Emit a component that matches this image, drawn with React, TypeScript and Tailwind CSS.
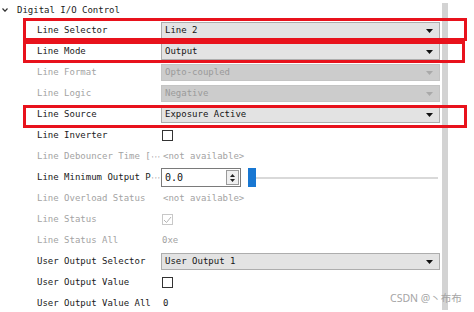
import type { ReactNode } from "react"

const mono = "font-['DejaVu_Sans_Mono',monospace] text-[9px] leading-none"

function Arrow({ disabled }: { disabled?: boolean }) {
  return (
    <svg width="7" height="4" viewBox="0 0 7 4">
      <path d="M0 0 L7 0 L3.5 4 Z" fill={disabled ? "#a9a9a9" : "#111"} />
    </svg>
  )
}

function Combo({ value, disabled }: { value: string; disabled?: boolean }) {
  return (
    <div
      className={`flex h-[17px] items-center justify-between border pl-[3px] pr-[6px] ${
        disabled ? "border-[#c4c4c4] bg-[#cccccc] text-[#9a9a9a]" : "border-[#adadad] bg-[#e3e3e3] text-[#151515]"
      }`}
    >
      <span>{value}</span>
      <Arrow disabled={disabled} />
    </div>
  )
}

function Check({ checked, disabled }: { checked?: boolean; disabled?: boolean }) {
  return (
    <div
      className={`ml-[1px] flex h-[11px] w-[11px] items-center justify-center border bg-white ${
        disabled ? "border-[#c8c8c8]" : "border-[#333]"
      }`}
    >
      {checked && (
        <svg width="9" height="8" viewBox="0 0 9 8">
          <path d="M1 4 L3.5 6.5 L8 1" stroke="#b4b4b4" strokeWidth="1" fill="none" />
        </svg>
      )}
    </div>
  )
}

function Row({ label, dim, more, children }: { label: string; dim?: boolean; more?: boolean; children?: ReactNode }) {
  return (
    <div className="flex h-[21px] items-center">
      <div className={`flex w-[124px] shrink-0 items-center whitespace-nowrap ${dim ? "text-[#a3a3a3]" : "text-[#1a1a1a]"}`}>
        <span>{label}</span>
        {more && <span className="text-[6px] tracking-[-0.5px] text-[#555]">···</span>}
      </div>
      <div className="w-[279px] shrink-0">{children}</div>
    </div>
  )
}

function Spin() {
  return (
    <div className="flex items-center">
      <div className="flex h-[19px] w-[80px] items-center justify-between border border-[#7a7a7a] bg-white pl-[3px] pr-[1px] text-[#111]">
        <span className="text-[10px]">0.0</span>
        <div className="flex h-[15px] w-[13px] flex-col items-center justify-center gap-[2px] border border-[#9a9a9a] bg-[#efefef]">
          <svg width="5" height="3" viewBox="0 0 5 3"><path d="M0 3 L2.5 0 L5 3 Z" fill="#222" /></svg>
          <svg width="5" height="3" viewBox="0 0 5 3"><path d="M0 0 L5 0 L2.5 3 Z" fill="#222" /></svg>
        </div>
      </div>
      <div className="ml-[7px] h-[19px] w-[8px] bg-[#1877d2]" />
      <div className="mr-[2px] h-[2px] flex-1 bg-[#d9d9d9]" />
    </div>
  )
}

const NA = () => <span className="pl-[2px] text-[#a3a3a3]">&lt;not available&gt;</span>

export default function App() {
  return (
    <div className={`relative h-[312px] w-[474px] overflow-hidden bg-white ${mono}`}>
      <div className="flex">
        <div className="w-[440px] shrink-0">
          <div className="flex h-[20px] items-center">
            <svg className="ml-[2px]" width="6" height="4" viewBox="0 0 6 4">
              <path d="M0.5 0.5 L3 3.2 L5.5 0.5" stroke="#333" strokeWidth="1.2" fill="none" />
            </svg>
            <span className="ml-[9px] text-[#1a1a1a]">Digital I/O Control</span>
          </div>
          <div className="pl-[37px]">
            <Row label="Line Selector"><Combo value="Line 2" /></Row>
            <Row label="Line Mode"><Combo value="Output" /></Row>
            <Row label="Line Format" dim><Combo value="Opto-coupled" disabled /></Row>
            <Row label="Line Logic" dim><Combo value="Negative" disabled /></Row>
            <Row label="Line Source"><Combo value="Exposure Active" /></Row>
            <Row label="Line Inverter"><Check /></Row>
            <Row label="Line Debouncer Time [" dim more><NA /></Row>
            <Row label="Line Minimum Output P" more><Spin /></Row>
            <Row label="Line Overload Status" dim><NA /></Row>
            <Row label="Line Status" dim><Check checked disabled /></Row>
            <Row label="Line Status All" dim><span className="pl-[1px] text-[#a3a3a3]">0xe</span></Row>
            <Row label="User Output Selector"><Combo value="User Output 1" /></Row>
            <Row label="User Output Value"><Check /></Row>
            <Row label="User Output Value All"><span className="pl-[2px] text-[#1a1a1a]">0</span></Row>
          </div>
        </div>
        <div className="mb-[4px] ml-[2px] mt-[3px] w-[6px] shrink-0 bg-[#d3d3d3]" />
      </div>

      <div className="absolute left-[23px] top-[18px] h-[23px] w-[444px] border-[3px] border-[#e8121c]" />
      <div className="absolute left-[23px] top-[41px] h-[22px] w-[442px] border-[3px] border-[#e8121c]" />
      <div className="absolute left-[23px] top-[105px] h-[23px] w-[444px] border-[3px] border-[#e8121c]" />

      <div className="absolute left-[390px] top-[293px] font-['Noto_Sans','Noto_Sans_CJK_SC',sans-serif] text-[10.5px] leading-none text-[#a5a5a5]">
        CSDN @丶布布
      </div>
    </div>
  )
}
